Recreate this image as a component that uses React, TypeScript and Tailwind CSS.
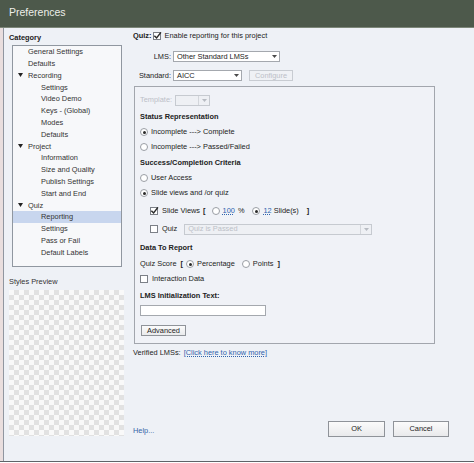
import clsx from 'clsx'

/**
 * Preferences dialog – Quiz > Reporting page
 */

const font = "font-['Liberation_Sans',Arial,sans-serif]"

function Check({ on = false }: { on?: boolean }) {
  return (
    <span className="relative inline-flex h-[8px] w-[8px] shrink-0 border border-[#7c8087] bg-white">
      {on && (
        <svg className="absolute left-[-1px] top-[-2px] h-[9px] w-[9px]" viewBox="0 0 10 10" fill="none">
          <path d="M1.5 5.2L4 7.8L8.8 1.5" stroke="#2a2a2a" strokeWidth="1.6" />
        </svg>
      )}
    </span>
  )
}

function Radio({ on = false }: { on?: boolean }) {
  return (
    <span className="inline-flex h-[8px] w-[8px] shrink-0 items-center justify-center rounded-full border border-[#9a9ea5] bg-white">
      {on && <span className="h-[3px] w-[3px] rounded-full bg-[#2a2a2a]" />}
    </span>
  )
}

function Arrow({ light = false }: { light?: boolean }) {
  return (
    <svg className="h-[3px] w-[5px]" viewBox="0 0 5 3">
      <path d="M0 0H5L2.5 3Z" fill={light ? '#b7bbc2' : '#4a4a4a'} />
    </svg>
  )
}

function Select({
  text,
  className,
  disabled = false,
  split = false
}: {
  text: string
  className: string
  disabled?: boolean
  split?: boolean
}) {
  return (
    <div
      className={clsx(
        'flex h-[11px] items-center border',
        disabled ? 'border-[#c6cad0] bg-[#eef0f4] text-[#bcc0c7]' : 'border-[#a4a8ae] bg-white text-[#222]',
        className
      )}
    >
      <span className="flex-1 truncate pl-[3px] leading-none">{text}</span>
      {split && <span className="h-full w-px bg-[#d3d6db]" />}
      <span className="flex w-[10px] justify-center">
        <Arrow light={disabled} />
      </span>
    </div>
  )
}

function Button({ label, className, disabled = false }: { label: string; className: string; disabled?: boolean }) {
  return (
    <div
      className={clsx(
        'flex items-center justify-center border leading-none',
        disabled
          ? 'border-[#c8ccd2] bg-[#eff1f5] text-[#bcc0c7]'
          : 'border-[#8f9399] bg-gradient-to-b from-[#fbfbfb] to-[#e9eaec] text-[#222]',
        className
      )}
    >
      {label}
    </div>
  )
}

const tree: { label: string; level: number; open?: boolean; active?: boolean }[] = [
  { label: 'General Settings', level: 1 },
  { label: 'Defaults', level: 1 },
  { label: 'Recording', level: 1, open: true },
  { label: 'Settings', level: 2 },
  { label: 'Video Demo', level: 2 },
  { label: 'Keys - (Global)', level: 2 },
  { label: 'Modes', level: 2 },
  { label: 'Defaults', level: 2 },
  { label: 'Project', level: 1, open: true },
  { label: 'Information', level: 2 },
  { label: 'Size and Quality', level: 2 },
  { label: 'Publish Settings', level: 2 },
  { label: 'Start and End', level: 2 },
  { label: 'Quiz', level: 1, open: true },
  { label: 'Reporting', level: 2, active: true },
  { label: 'Settings', level: 2 },
  { label: 'Pass or Fail', level: 2 },
  { label: 'Default Labels', level: 2 }
]

export default function App() {
  return (
    <div className={clsx('h-[463px] w-[474px] overflow-hidden bg-white text-[7.4px] text-[#222]', font)}>
      {/* Title bar */}
      <div className="flex h-[28px] items-center border-b border-[#7d8779] bg-[#4d594b] pl-[9px] pb-[2px] text-[10.5px] text-[#eceee9]">
        Preferences
      </div>

      <div className="flex h-[434px] border-b border-[#5f6368] bg-[#e9dede] pl-[3px]">
        <div className="flex flex-1 border-l border-[#9096a0] bg-[#eef1f6]">
          {/* Category column */}
          <div className="flex w-[129px] flex-col pl-[5px] pt-[4px]">
            <div className="h-[12px] font-bold leading-[12px]">Category</div>
            <div className="ml-[3px] mt-[1px] h-[222px] w-[110px] border border-[#9097a0] bg-[#f7f8fa] text-[#333]">
              {tree.map((item, i) => (
                <div
                  key={i}
                  className={clsx(
                    'flex h-[11.8px] items-center leading-none',
                    item.active && 'bg-[#c8d6ee]',
                    item.level === 1 ? 'pl-[15px]' : 'pl-[28px]'
                  )}
                >
                  {item.open && (
                    <span className="-ml-[10px] mr-[5px] flex">
                      <svg className="h-[4px] w-[5px]" viewBox="0 0 5 4">
                        <path d="M0 0H5L2.5 4Z" fill="#222" />
                      </svg>
                    </span>
                  )}
                  {item.label}
                </div>
              ))}
            </div>
            <div className="mt-[9px] h-[12px] leading-[12px] text-[#333]">Styles Preview</div>
            <div className="mt-[2px] h-[146px] w-[115px] bg-[image:conic-gradient(#e2e2e2_25%,#f9f9f9_0_50%,#e2e2e2_0_75%,#f9f9f9_0)] bg-size-[10px_10px]" />
          </div>

          {/* Settings column */}
          <div className="flex flex-1 flex-col pt-[2px]">
            <div className="flex h-[12px] items-center">
              <span className="font-bold">Quiz:</span>
              <span className="ml-[2px] mr-[3px] flex">
                <Check on />
              </span>
              Enable reporting for this project
            </div>

            <div className="mt-[9px] flex h-[11px] items-center">
              <span className="w-[38px] text-right">LMS:</span>
              <Select text="Other Standard LMSs" className="ml-[2px] w-[107px]" />
            </div>

            <div className="mt-[8px] flex h-[11px] items-center">
              <span className="w-[38px] text-right">Standard:</span>
              <Select text="AICC" className="ml-[2px] w-[69px]" />
              <Button label="Configure" disabled className="ml-[7px] h-[11px] w-[44px]" />
            </div>

            {/* Reporting group */}
            <div className="ml-[1px] mt-[5px] flex h-[258px] w-[301px] flex-col border border-[#a2a6ad] bg-[#f0f2f7] pl-[5px] pt-[7px]">
              <div className="flex h-[12px] items-center text-[#bcc0c7]">
                Template:
                <Select text="" disabled split className="ml-[3px] w-[35px]" />
              </div>

              <div className="mt-[5px] h-[12px] font-bold leading-[12px]">Status Representation</div>
              <div className="mt-[3px] flex h-[12px] items-center gap-[3px]">
                <Radio on />
                Incomplete ---&gt; Complete
              </div>
              <div className="mt-[3px] flex h-[12px] items-center gap-[3px]">
                <Radio />
                Incomplete ---&gt; Passed/Failed
              </div>

              <div className="mt-[4px] h-[12px] font-bold leading-[12px]">Success/Completion Criteria</div>
              <div className="mt-[3px] flex h-[12px] items-center gap-[3px]">
                <Radio />
                User Access
              </div>
              <div className="mt-[3px] flex h-[12px] items-center gap-[3px]">
                <Radio on />
                Slide views and /or quiz
              </div>

              <div className="mt-[6px] flex h-[12px] items-center pl-[10px]">
                <Check on />
                <span className="ml-[4px]">Slide Views</span>
                <span className="ml-[3px] font-bold">[</span>
                <span className="ml-[6px] flex">
                  <Radio />
                </span>
                <span className="ml-[3px] text-[#2e63ad] underline decoration-dotted">100</span>
                <span className="ml-[3px]">%</span>
                <span className="ml-[8px] flex">
                  <Radio on />
                </span>
                <span className="ml-[3px] text-[#2e63ad] underline decoration-dotted">12</span>
                <span className="ml-[2px]">Slide(s)</span>
                <span className="ml-[8px] font-bold">]</span>
              </div>

              <div className="mt-[6px] flex h-[12px] items-center pl-[10px]">
                <Check />
                <span className="ml-[4px]">Quiz</span>
                <Select text="Quiz is Passed" disabled split className="ml-[7px] w-[188px]" />
              </div>

              <div className="mt-[7px] h-[12px] font-bold leading-[12px]">Data To Report</div>
              <div className="mt-[4px] flex h-[12px] items-center">
                Quiz Score
                <span className="ml-[4px] font-bold">[</span>
                <span className="ml-[3px] flex">
                  <Radio on />
                </span>
                <span className="ml-[3px]">Percentage</span>
                <span className="ml-[7px] flex">
                  <Radio />
                </span>
                <span className="ml-[3px]">Points</span>
                <span className="ml-[4px] font-bold">]</span>
              </div>
              <div className="mt-[3px] flex h-[12px] items-center gap-[4px]">
                <Check />
                Interaction Data
              </div>

              <div className="mt-[5px] h-[12px] font-bold leading-[12px]">LMS Initialization Text:</div>
              <div className="mt-[3px] h-[11px] w-[126px] border border-[#a4a8ae] bg-white" />
              <Button label="Advanced" className="ml-[1px] mt-[9px] h-[11px] w-[45px]" />
            </div>

            <div className="mt-[3px] flex h-[12px] items-center">
              Verified LMSs:
              <span className="ml-[3px] text-[#2e63ad] underline decoration-dotted">[Click here to know more]</span>
            </div>

            <div className="mt-auto mb-[24px] flex h-[16px] items-end">
              <span className="mb-[1px] text-[#3565a8]">Help...</span>
              <Button label="OK" className="ml-auto h-[16px] w-[57px]" />
              <Button label="Cancel" className="ml-[8px] mr-[25px] h-[16px] w-[56px]" />
            </div>
          </div>
        </div>
      </div>
    </div>
  )
}
